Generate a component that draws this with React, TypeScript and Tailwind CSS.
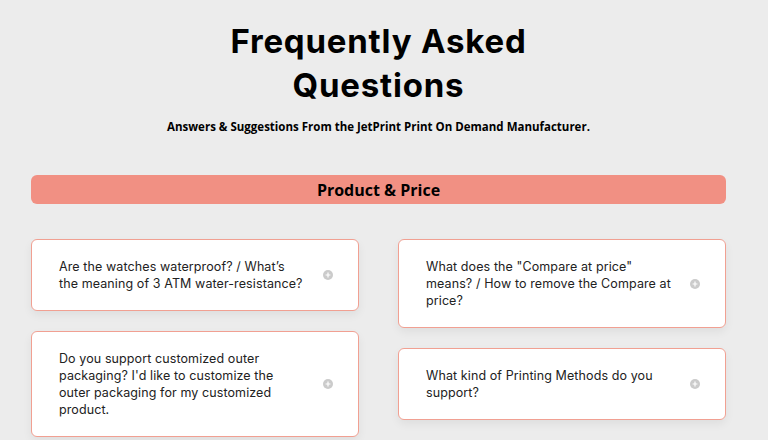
const faqLeft = [
  "Are the watches waterproof? / What’s the meaning of 3 ATM water-resistance?",
  "Do you support customized outer packaging? I'd like to customize the outer packaging for my customized product.",
];

const faqRight = [
  'What does the "Compare at price" means? / How to remove the Compare at price?',
  "What kind of Printing Methods do you support?",
];

function PlusDot() {
  return (
    <svg width="10" height="10" viewBox="0 0 10 10" className="shrink-0">
      <circle cx="5" cy="5" r="5" fill="#cbcbcb" />
      <path d="M5 2.6v4.8M2.6 5h4.8" stroke="#fff" strokeWidth="1.2" />
    </svg>
  );
}

function FaqCard({ text }: { text: string }) {
  return (
    <div className="flex items-center justify-between rounded-md border border-[#f1a092] bg-white py-[18px] pl-[27px] pr-[25px] shadow-[0_4px_10px_rgba(0,0,0,0.06)]">
      <p className="w-[247px] text-[12.5px] leading-[17px] tracking-[0.1px] text-[#222]">{text}</p>
      <PlusDot />
    </div>
  );
}

export default function App() {
  return (
    <main className="min-h-[440px] bg-[#ececec] font-['Inter',sans-serif] text-black">
      <div className="ml-[31px] w-[695px] pt-[19px]">
        <h1 className="mx-auto w-[330px] text-center text-[33px] font-bold leading-[44px] tracking-[0.8px]">
          Frequently Asked Questions
        </h1>
        <p className="mt-[11px] text-center font-['Open_Sans',sans-serif] text-[11.5px] font-bold">
          Answers &amp; Suggestions From the JetPrint Print On Demand Manufacturer.
        </p>

        <div className="mt-[40px] flex h-[29px] items-center justify-center rounded-md bg-[#f19083]">
          <h2 className="font-['Open_Sans',sans-serif] text-[16px] font-bold">Product &amp; Price</h2>
        </div>

        <div className="mt-[35px] grid grid-cols-2 gap-x-[39px]">
          <div className="flex flex-col gap-[20px]">
            {faqLeft.map((q) => (
              <FaqCard key={q} text={q} />
            ))}
          </div>
          <div className="flex flex-col gap-[20px]">
            {faqRight.map((q) => (
              <FaqCard key={q} text={q} />
            ))}
          </div>
        </div>
      </div>
    </main>
  );
}
